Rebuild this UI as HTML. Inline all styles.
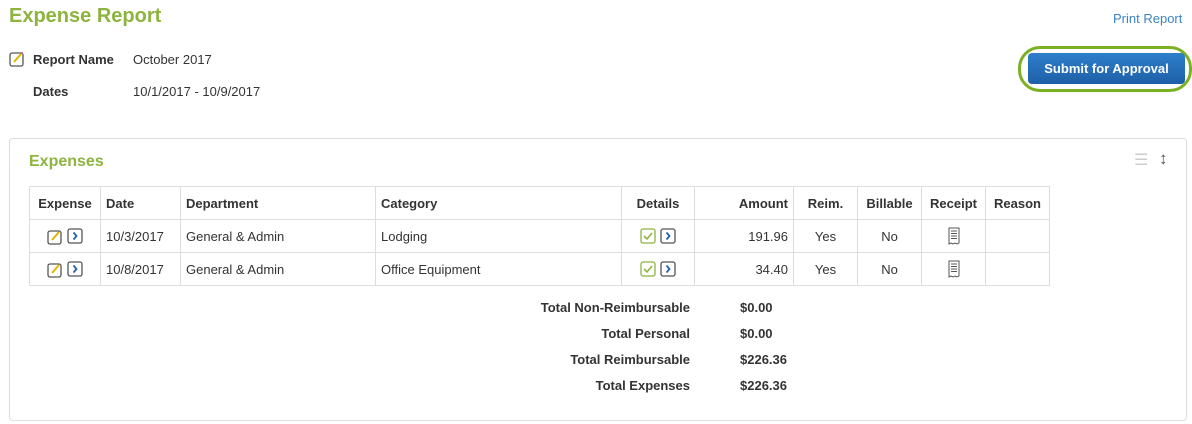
<!DOCTYPE html>
<html><head><style>
body{margin:0;width:1192px;height:424px;background:#fff;font-family:"Liberation Sans",sans-serif;font-size:13px;color:#333;position:relative;overflow:hidden}
.a{position:absolute;white-space:nowrap}
h1{position:absolute;left:9px;top:5px;margin:0;font-size:20px;font-weight:bold;color:#8db43e}
.b{font-weight:bold}
table{position:absolute;left:29px;top:186px;border-collapse:collapse;table-layout:fixed;width:1020px;font-size:13px}
td{border:1px solid #ddd;height:33px;padding:0 5px;box-sizing:border-box;white-space:nowrap;overflow:hidden}
tr:first-child td{font-weight:bold}
svg{vertical-align:middle}
</style></head><body>
<h1>Expense Report</h1>
<div class="a" style="left:1113px;top:11px;color:#3a84c6">Print Report</div>
<svg class="a" style="left:9px;top:50px" width="17" height="17"><rect x="1" y="3" width="13" height="13" rx="2" fill="none" stroke="#555" stroke-width="1.3"/><path d="M5 12 L12 4" stroke="#e5b400" stroke-width="2"/><circle cx="13" cy="3" r="1" fill="#e05080"/></svg>
<div class="a b" style="left:33px;top:52px">Report Name</div>
<div class="a" style="left:133px;top:52px">October 2017</div>
<div class="a b" style="left:33px;top:84px">Dates</div>
<div class="a" style="left:133px;top:84px">10/1/2017 - 10/9/2017</div>
<div class="a" style="left:1018px;top:46px;width:168px;height:40px;border:3px solid #7cb023;border-radius:22px"></div>
<div class="a b" style="left:1028px;top:53px;width:157px;height:31px;line-height:31px;text-align:center;color:#fff;background:linear-gradient(#2f7fcb,#1e5fa8);border-radius:4px">Submit for Approval</div>
<div class="a" style="left:9px;top:138px;width:1176px;height:281px;border:1px solid #ddd;border-radius:4px"></div>
<div class="a b" style="left:29px;top:153px;font-size:16px;color:#8db43e">Expenses</div>
<div class="a" style="left:1134px;top:150px;color:#ccc;font-size:16px">☰</div>
<div class="a" style="left:1159px;top:149px;color:#555;font-size:17px">↕</div>
<table>
<colgroup><col style="width:71px"><col style="width:80px"><col style="width:195px"><col style="width:246px"><col style="width:73px"><col style="width:99px"><col style="width:64px"><col style="width:64px"><col style="width:64px"><col style="width:64px"></colgroup>
<tr><td style="text-align:center">Expense</td><td>Date</td><td>Department</td><td>Category</td><td style="text-align:center">Details</td><td style="text-align:right">Amount</td><td style="text-align:center">Reim.</td><td style="text-align:center">Billable</td><td style="text-align:center">Receipt</td><td style="text-align:center">Reason</td></tr>
<tr><td style="text-align:center"><svg width="17" height="17"><rect x="1" y="3" width="13" height="13" rx="2" fill="none" stroke="#555" stroke-width="1.3"/><path d="M5 12 L12 4" stroke="#e5b400" stroke-width="2"/></svg> <svg width="16" height="16"><rect x="1" y="1" width="14" height="14" rx="2" fill="none" stroke="#555" stroke-width="1.3"/><path d="M6.5 4.5 L9.5 8 L6.5 11.5" fill="none" stroke="#2a62a8" stroke-width="1.8"/></svg></td><td>10/3/2017</td><td>General &amp; Admin</td><td>Lodging</td><td style="text-align:center"><svg width="16" height="16"><rect x="1" y="1" width="14" height="14" rx="2" fill="none" stroke="#8db43e" stroke-width="1.3"/><path d="M4 8 L7 11 L12 5" fill="none" stroke="#8db43e" stroke-width="1.6"/></svg> <svg width="16" height="16"><rect x="1" y="1" width="14" height="14" rx="2" fill="none" stroke="#555" stroke-width="1.3"/><path d="M6.5 4.5 L9.5 8 L6.5 11.5" fill="none" stroke="#2a62a8" stroke-width="1.8"/></svg></td><td style="text-align:right">191.96</td><td style="text-align:center">Yes</td><td style="text-align:center">No</td><td style="text-align:center"><svg width="12" height="18"><path d="M1 1H11V16L9 17L7 16L5 17L3 16L1 17Z M3 4H9 M3 6.5H9 M3 9H9 M3 11.5H9" fill="none" stroke="#555"/></svg></td><td></td></tr>
<tr><td style="text-align:center"><svg width="17" height="17"><rect x="1" y="3" width="13" height="13" rx="2" fill="none" stroke="#555" stroke-width="1.3"/><path d="M5 12 L12 4" stroke="#e5b400" stroke-width="2"/></svg> <svg width="16" height="16"><rect x="1" y="1" width="14" height="14" rx="2" fill="none" stroke="#555" stroke-width="1.3"/><path d="M6.5 4.5 L9.5 8 L6.5 11.5" fill="none" stroke="#2a62a8" stroke-width="1.8"/></svg></td><td>10/8/2017</td><td>General &amp; Admin</td><td>Office Equipment</td><td style="text-align:center"><svg width="16" height="16"><rect x="1" y="1" width="14" height="14" rx="2" fill="none" stroke="#8db43e" stroke-width="1.3"/><path d="M4 8 L7 11 L12 5" fill="none" stroke="#8db43e" stroke-width="1.6"/></svg> <svg width="16" height="16"><rect x="1" y="1" width="14" height="14" rx="2" fill="none" stroke="#555" stroke-width="1.3"/><path d="M6.5 4.5 L9.5 8 L6.5 11.5" fill="none" stroke="#2a62a8" stroke-width="1.8"/></svg></td><td style="text-align:right">34.40</td><td style="text-align:center">Yes</td><td style="text-align:center">No</td><td style="text-align:center"><svg width="12" height="18"><path d="M1 1H11V16L9 17L7 16L5 17L3 16L1 17Z M3 4H9 M3 6.5H9 M3 9H9 M3 11.5H9" fill="none" stroke="#555"/></svg></td><td></td></tr>
</table>
<div class="a b" style="right:502px;top:300px">Total Non-Reimbursable</div><div class="a b" style="left:740px;top:300px">$0.00</div>
<div class="a b" style="right:502px;top:326px">Total Personal</div><div class="a b" style="left:740px;top:326px">$0.00</div>
<div class="a b" style="right:502px;top:352px">Total Reimbursable</div><div class="a b" style="left:740px;top:352px">$226.36</div>
<div class="a b" style="right:502px;top:378px">Total Expenses</div><div class="a b" style="left:740px;top:378px">$226.36</div>
</body></html>
